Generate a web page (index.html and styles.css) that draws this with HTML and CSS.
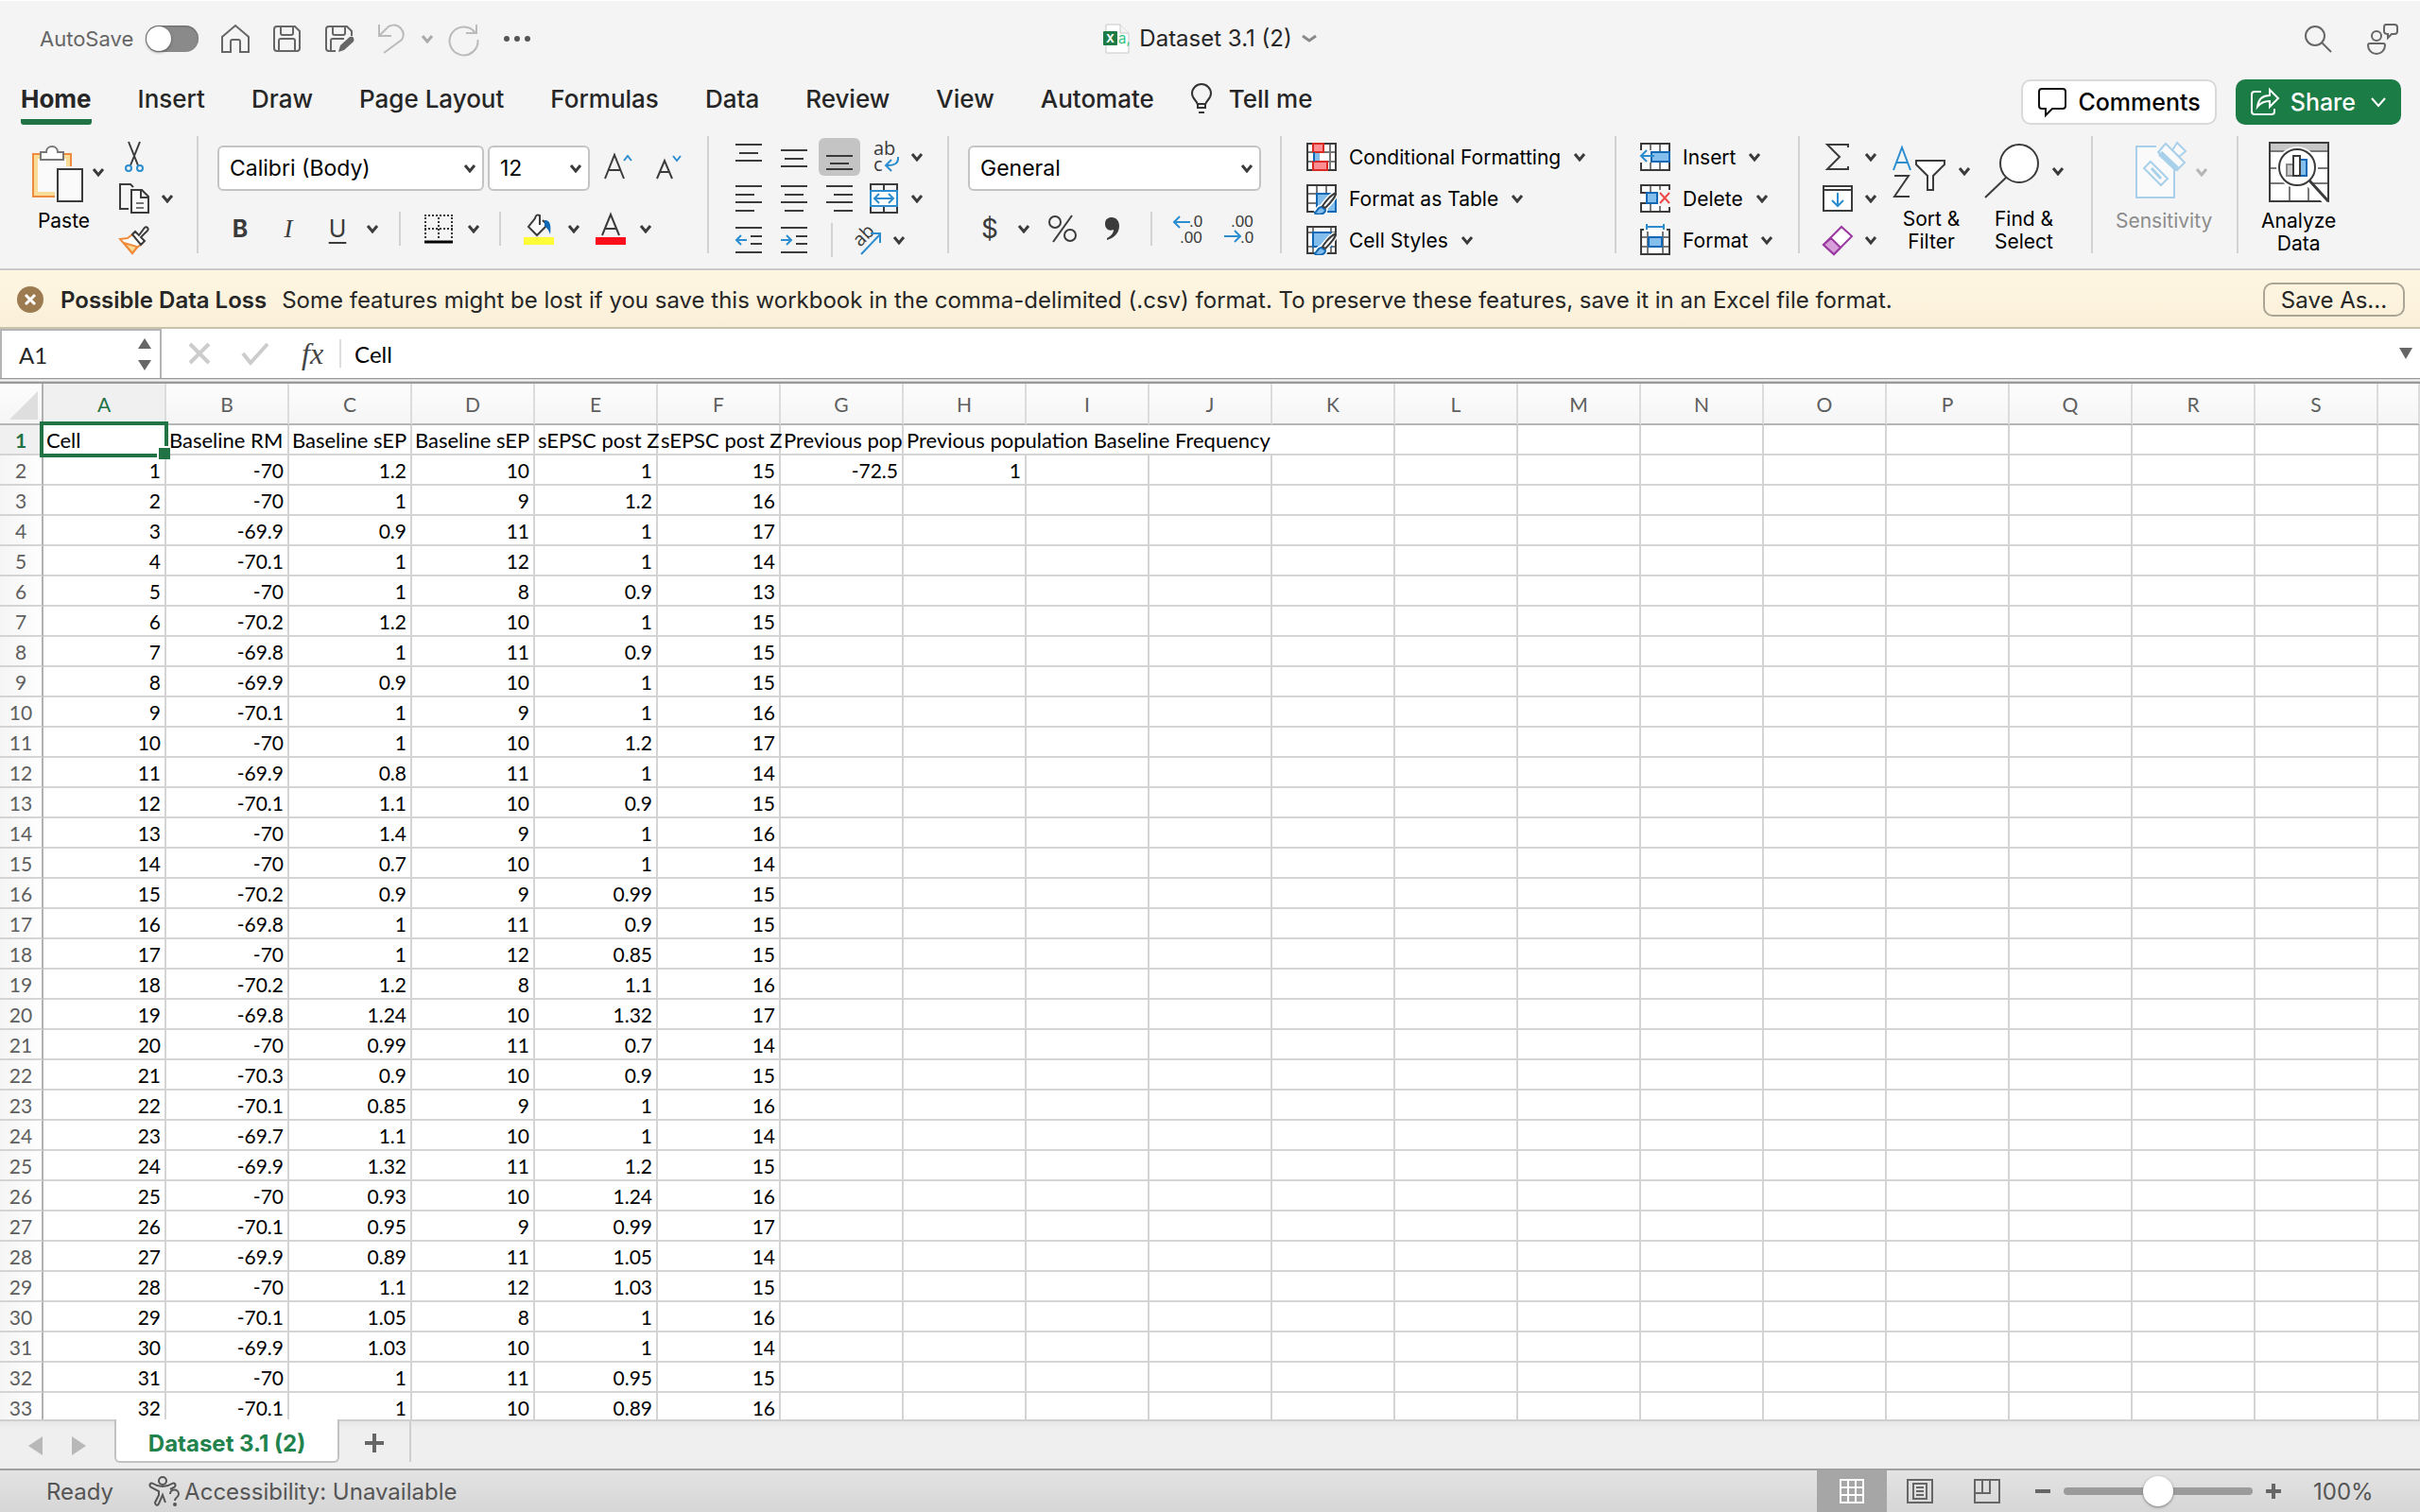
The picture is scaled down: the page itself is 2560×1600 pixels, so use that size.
FILE: index.html
```html
<!DOCTYPE html>
<html lang="en">
<head>
    <meta charset="UTF-8">
    <meta name="viewport" content="width=device-width, initial-scale=1.0">
    <title>Dataset 3.1 (2)</title>
    <link rel="stylesheet" href="styles.css">
</head>
<body>
    <svg class="sprite" aria-hidden="true">
        <symbol id="chev" viewBox="0 0 14 10"><path d="M2 2l5 6 5-6" fill="none" stroke="currentColor" stroke-width="3"/></symbol>
        <symbol id="pen" viewBox="0 0 24 24">
            <path d="M0 22c4 0 3-6 8-6l4 3c0 5-8 6-12 3z" fill="#83beec" stroke="#fff" stroke-width="5"/>
            <path d="M9 15C13 9 19 3 23 1c1 2-4 9-11 16z" fill="#fff" stroke="#fff" stroke-width="5"/>
            <path d="M0 22c4 0 3-6 8-6l4 3c0 5-8 6-12 3z" fill="#83beec" stroke="#1068b5" stroke-width="2"/>
            <path d="M9 15C13 9 19 3 23 1c1 2-4 9-11 16z" fill="#fff" stroke="#3b3b3b" stroke-width="2"/>
        </symbol>
    </svg>

    <header class="titlebar">
        <div class="quick">
            <label for="autosave">AutoSave</label>
            <input type="checkbox" id="autosave" class="toggle">
            <button aria-label="Home"><svg width="32" height="32" viewBox="0 0 32 32"><path d="M2 14L16 2l14 12v16h-9V19q0-2-2-2h-6q-2 0-2 2v11H2z"/></svg></button>
            <button aria-label="Save"><svg width="32" height="32" viewBox="0 0 32 32"><path d="M5 3h19l5 5v18q0 3-3 3H5q-3 0-3-3V6q0-3 3-3zM9 3v7q0 2 2 2h9q2 0 2-2V3M7 29V18q0-2 2-2h13q2 0 2 2v11"/></svg></button>
            <button aria-label="Save As"><svg width="32" height="32" viewBox="0 0 32 32"><path d="M12 29H5q-3 0-3-3V6q0-3 3-3h19l5 5v5M9 3v7q0 2 2 2h9q2 0 2-2V3M7 29V18q0-2 2-2h12"/><path d="M15 30l2-7 10-9q3-1 4 1t0 4l-10 9z" fill="#666" stroke="none"/></svg></button>
            <button class="faded" aria-label="Undo"><svg width="32" height="32" viewBox="0 0 32 32"><path d="M3 1v12h13M3 13L13 3q8-4 13 2t1 12L8 31"/></svg></button>
            <button class="faded small" aria-label="Undo history"><svg class="chev"><use href="#chev"/></svg></button>
            <button class="faded" aria-label="Redo"><svg width="34" height="32" viewBox="0 0 34 32"><path d="M30 1v9H19M29 10A15 15 0 1 0 31.500 17"/></svg></button>
            <button aria-label="More"><svg width="32" height="32" viewBox="0 0 32 32"><g fill="#555" stroke="none"><circle cx="5" cy="16" r="3"/><circle cx="16" cy="16" r="3"/><circle cx="27" cy="16" r="3"/></g></svg></button>
        </div>
        <button class="docname">
            <svg width="30" height="34" viewBox="0 0 30 34"><path d="M4 2h15l9 9v21H4z" fill="#fff" stroke="#c8c8c8" stroke-width="1"/><path d="M19 2v9h9" fill="#f4f4f4" stroke="#c8c8c8" stroke-width="1"/><rect x="1" y="9" width="15" height="15" rx="1" fill="#1d7b45"/><text x="4" y="21" class="doc-x">X</text><text x="17" y="22" class="doc-a">a,</text></svg>
            Dataset 3.1 (2)
            <svg class="chev-wide" width="18" height="10" viewBox="0 0 18 10"><path d="M2 2l7 5 7-5" fill="none" stroke="#8a8a8a" stroke-width="3"/></svg>
        </button>
        <div class="corner">
            <button aria-label="Search"><svg width="30" height="32" viewBox="0 0 30 32"><circle cx="12" cy="13" r="10"/><path d="M19 20l10 10"/></svg></button>
            <button aria-label="Presence"><svg width="34" height="34" viewBox="0 0 34 34"><circle cx="11" cy="14" r="5"/><path d="M4 22h14q2 0 2 2c0 5-4 9-9 9s-9-4-9-9q0-2 2-2z"/><path d="M21 2h9q3 0 3 3v4q0 3-3 3h-3l-4 4v-4q-4 0-4-3V5q0-3 2-3z"/></svg></button>
        </div>
    </header>

    <div class="tabrow">
        <nav class="tabs">
            <a href="#" class="active">Home</a>
            <a href="#">Insert</a>
            <a href="#">Draw</a>
            <a href="#">Page Layout</a>
            <a href="#">Formulas</a>
            <a href="#">Data</a>
            <a href="#">Review</a>
            <a href="#">View</a>
            <a href="#">Automate</a>
            <a href="#" class="tellme"><svg width="22" height="32" viewBox="0 0 22 32"><path d="M7 25v-3c0-4-6-6-6-12a10 10 0 0 1 20 0c0 6-6 8-6 12v3zM7 21h8M8 30h6" fill="none" stroke="#333" stroke-width="2"/></svg>Tell me</a>
        </nav>
        <div class="actions">
            <button class="comments"><svg width="32" height="32" viewBox="0 0 32 32"><path d="M5 2h22q3 0 3 3v15q0 3-3 3H16l-7 7v-7H5q-3 0-3-3V5q0-3 3-3z" fill="none" stroke="#111" stroke-width="2"/></svg>Comments</button>
            <button class="share"><svg width="32" height="32" viewBox="0 0 32 32"><path d="M12 5H5Q2 5 2 8v18q0 3 3 3h18q3 0 3-3v-3M8 21c1-8 5-12 13-12V3l9 9-9 9v-6c-6 0-10 2-13 6z" fill="none" stroke="#fff" stroke-width="2"/></svg>Share<svg class="chev-share" width="18" height="12" viewBox="0 0 18 12"><path d="M2 2l7 8 7-8" fill="none" stroke="#fff" stroke-width="2"/></svg></button>
        </div>
    </div>

    <div class="ribbon">
        <section class="group clipboard">
            <button class="big paste">
                <span class="pic"><svg width="56" height="64" viewBox="0 0 56 64"><path d="M1 13h40v18H27v27H1z" fill="#f9dc97" stroke="#ee8b3c" stroke-width="2"/><path d="M6 18h30v14H26v21H6z" fill="#fafafa"/><path d="M9 11h6c0-8 12-8 12 0h6v8H9z" fill="#fff" stroke="#777" stroke-width="2"/><path d="M24 26h32v38H24z" fill="#f4f4f4"/><rect x="27" y="29" width="26" height="34" fill="#fafafa" stroke="#3b3b3b" stroke-width="2"/></svg><svg class="chev"><use href="#chev"/></svg></span>
                <span class="caption">Paste</span>
            </button>
            <div class="stack">
                <button aria-label="Cut"><svg width="32" height="34" viewBox="0 0 32 34"><path d="M10 1l10 25M22 1L12 26" fill="none" stroke="#3b3b3b" stroke-width="2"/><g fill="none" stroke="#2b8dd0" stroke-width="2"><circle cx="10" cy="29" r="3"/><circle cx="22" cy="29" r="3"/></g></svg></button>
                <button aria-label="Copy"><svg width="32" height="34" viewBox="0 0 32 34"><path d="M10 28H1V2h11l3 3" fill="none" stroke="#3b3b3b" stroke-width="2"/><path d="M13 8h11l7 7v17H13zM23 8v8h8" fill="#fafafa" stroke="#3b3b3b" stroke-width="2"/><path d="M18 22h8M18 27h8" stroke="#777" stroke-width="2"/></svg><svg class="chev"><use href="#chev"/></svg></button>
                <button aria-label="Format Painter"><svg width="32" height="32" viewBox="0 0 32 32"><path d="M1 15l8-1 5-4 10 10-5 4-5 6z" fill="#fff" stroke="#ee8b3c" stroke-width="2"/><path d="M5 19l14 4-5 7z" fill="#f9dc97" stroke="#ee8b3c" stroke-width="2"/><path d="M14 10l3-3 4 4 6-8c2-2 5 1 3 3l-7 7 4 4-4 4z" fill="#fff" stroke="#3b3b3b" stroke-width="2"/></svg></button>
            </div>
        </section>

        <section class="group font">
            <div class="line">
                <div class="select face"><select aria-label="Font"><option>Calibri (Body)</option></select><svg class="chev"><use href="#chev"/></svg></div>
                <div class="select size"><select aria-label="Font size"><option>12</option></select><svg class="chev"><use href="#chev"/></svg></div>
                <button class="grow" aria-label="Increase Font Size"><svg width="32" height="30" viewBox="0 0 32 30"><path d="M2 28L12 3l10 25M6 19h12" fill="none" stroke="#3b3b3b" stroke-width="2"/><path d="M22 9l4-5 4 5" fill="none" stroke="#2b8dd0" stroke-width="2"/></svg></button>
                <button class="grow" aria-label="Decrease Font Size"><svg width="32" height="30" viewBox="0 0 32 30"><path d="M3 28L11 9l8 19M6 21h10" fill="none" stroke="#3b3b3b" stroke-width="2"/><path d="M20 4l4 5 4-5" fill="none" stroke="#2b8dd0" stroke-width="2"/></svg></button>
            </div>
            <div class="line tools">
                <button class="letter bold">B</button>
                <button class="letter italic">I</button>
                <button class="letter under">U</button>
                <button class="drop" aria-label="Underline style"><svg class="chev"><use href="#chev"/></svg></button>
                <i class="rule"></i>
                <button class="pair" aria-label="Borders"><svg width="32" height="32" viewBox="0 0 32 32"><path d="M1 2h30M1 16h30M2 4v24M16 4v24M30 4v24" fill="none" stroke="#333" stroke-width="2" stroke-dasharray="2 2"/><path d="M1 30h30" stroke="#000" stroke-width="3"/></svg><svg class="chev"><use href="#chev"/></svg></button>
                <i class="rule"></i>
                <button class="pair" aria-label="Fill Color"><svg width="32" height="34" viewBox="0 0 32 34"><path d="M17 13V3q-4-2-5 3l-7 9 9 9 11-11-5-5" fill="#fafafa" stroke="#3b3b3b" stroke-width="2"/><path d="M22 8q8-1 6 15-2-6-6-9z" fill="#1068b5"/><rect y="26" width="32" height="8" fill="#fffd38"/></svg><svg class="chev"><use href="#chev"/></svg></button>
                <button class="pair" aria-label="Font Color"><svg width="32" height="34" viewBox="0 0 32 34"><path d="M7 24l9-22 9 22M10 17h12" fill="none" stroke="#3b3b3b" stroke-width="2"/><rect y="26" width="32" height="8" fill="#fc0d1b"/></svg><svg class="chev"><use href="#chev"/></svg></button>
            </div>
        </section>

        <section class="group align">
            <button aria-label="Top Align"><svg width="28" height="28" viewBox="0 0 28 28"><path d="M0 1h28M4 10h20M0 18h28"/></svg></button>
            <button aria-label="Middle Align"><svg width="28" height="28" viewBox="0 0 28 28"><path d="M0 7h28M4 16h20M0 24h28"/></svg></button>
            <button class="on" aria-label="Bottom Align"><svg width="28" height="28" viewBox="0 0 28 28"><path d="M0 13h28M4 21h20M0 27h28"/></svg></button>
            <button class="pair" aria-label="Wrap Text"><svg width="30" height="34" viewBox="0 0 30 34"><text x="4" y="15" class="ab">ab</text><text x="4" y="32" class="ab">c</text><path d="M30 17q1 10-13 9M23 20l-6 6 6 6" class="blue"/></svg><svg class="chev"><use href="#chev"/></svg></button>
            <button aria-label="Align Left"><svg width="28" height="28" viewBox="0 0 28 28"><path d="M0 1h28M0 10h20M0 18h28M0 27h20"/></svg></button>
            <button aria-label="Center"><svg width="28" height="28" viewBox="0 0 28 28"><path d="M0 1h28M4 10h20M0 18h28M4 27h20"/></svg></button>
            <button aria-label="Align Right"><svg width="28" height="28" viewBox="0 0 28 28"><path d="M0 1h28M8 10h20M0 18h28M8 27h20"/></svg></button>
            <button class="pair" aria-label="Merge and Center"><svg width="30" height="32" viewBox="0 0 30 32"><path d="M1 1h28v30H1zM15 1v6M15 25v6"/><rect x="1" y="8" width="28" height="16" class="blue white"/><path d="M5 16h20M10 11l-5 5 5 5M20 11l5 5-5 5" class="blue"/></svg><svg class="chev"><use href="#chev"/></svg></button>
            <button aria-label="Decrease Indent"><svg width="28" height="28" viewBox="0 0 28 28"><path d="M0 1h28M16 10h12M16 18h12M0 27h28"/><path d="M1 14h11M6 9l-5 5 5 5" class="blue"/></svg></button>
            <button aria-label="Increase Indent"><svg width="28" height="28" viewBox="0 0 28 28"><path d="M0 1h28M16 10h12M16 18h12M0 27h28"/><path d="M0 14h11M6 9l5 5-5 5" class="blue"/></svg></button>
            <i class="rule"></i>
            <button class="pair orient" aria-label="Orientation"><svg width="34" height="34" viewBox="0 0 34 34"><text x="0" y="0" transform="translate(10 25) rotate(-45)" class="ab">ab</text><path d="M11 32l20-21M21 10h10v10" class="blue"/></svg><svg class="chev"><use href="#chev"/></svg></button>
        </section>

        <section class="group number">
            <div class="line">
                <div class="select format"><select aria-label="Number Format"><option>General</option></select><svg class="chev"><use href="#chev"/></svg></div>
            </div>
            <div class="line tools">
                <button class="dollar pair" aria-label="Currency"><span>$</span><svg class="chev"><use href="#chev"/></svg></button>
                <button aria-label="Percent"><svg width="32" height="32" viewBox="0 0 32 32"><g fill="none" stroke="#3b3b3b" stroke-width="2"><circle cx="8" cy="9" r="6"/><circle cx="24" cy="23" r="6"/><path d="M26 2L6 30"/></g></svg></button>
                <button class="comma" aria-label="Comma Style"><svg width="18" height="28" viewBox="0 0 18 28"><path d="M8 2c5 0 8 4 8 9 0 8-6 13-13 15v-2c4-2 7-5 7-9-5 2-9-1-9-6s3-7 7-7z" fill="#3b3b3b"/></svg></button>
                <i class="rule"></i>
                <button class="dec" aria-label="Increase Decimal"><svg width="32" height="34" viewBox="0 0 32 34"><text x="17" y="15" class="num">.0</text><text x="7" y="32" class="num">.00</text><path d="M1 10h17M7 4l-6 6 6 6" class="blue"/></svg></button>
                <button class="dec" aria-label="Decrease Decimal"><svg width="32" height="34" viewBox="0 0 32 34"><text x="7" y="15" class="num">.00</text><text x="17" y="32" class="num">.0</text><path d="M0 25h17M11 19l6 6-6 6" class="blue"/></svg></button>
            </div>
        </section>

        <section class="group stack labelled">
            <button><svg width="32" height="30" viewBox="0 0 32 30"><rect x="1" y="1" width="30" height="28" fill="#fff"/><path d="M1 10h30M1 20h30M25 1v28" class="g"/><rect x="1" y="1" width="30" height="28" class="k"/><path d="M7 1h11v9H7zM7 20h15v9H7z" fill="#ff8d92" stroke="#d92a23" stroke-width="2"/><path d="M7 11h7v8H7z" fill="#83beec"/><path d="M8 10v10" stroke="#1068b5" stroke-width="2"/></svg>Conditional Formatting<svg class="chev"><use href="#chev"/></svg></button>
            <button><svg width="32" height="30" viewBox="0 0 32 30"><rect x="1" y="1" width="30" height="28" fill="#fff"/><path d="M1 10h30M1 20h10M11 1v9M21 1v9" class="g"/><rect x="1" y="1" width="30" height="28" class="k"/><rect x="11" y="10" width="20" height="19" class="b"/><use href="#pen" x="8" y="8" width="24" height="24"/></svg>Format as Table<svg class="chev"><use href="#chev"/></svg></button>
            <button><svg width="32" height="30" viewBox="0 0 32 30"><rect x="1" y="1" width="30" height="28" fill="#fff"/><path d="M7 1v28M1 7h30M26 1v28M1 22h30" class="g"/><rect x="1" y="1" width="30" height="28" class="k"/><rect x="7" y="7" width="19" height="15" class="b"/><use href="#pen" x="8" y="7" width="24" height="24"/></svg>Cell Styles<svg class="chev"><use href="#chev"/></svg></button>
        </section>

        <section class="group stack labelled cells">
            <button><svg width="32" height="30" viewBox="0 0 32 30"><rect x="1" y="1" width="30" height="28" fill="#fff"/><path d="M11 1v28M21 1v28" class="g"/><rect x="1" y="1" width="30" height="28" class="k"/><path d="M0 8h14v13H0z" fill="#f4f4f4"/><rect x="12" y="10" width="19" height="10" class="b"/><path d="M1 14h14M7 8l-6 6 6 6" class="blue"/></svg>Insert<svg class="chev"><use href="#chev"/></svg></button>
            <button><svg width="32" height="30" viewBox="0 0 32 30"><rect x="1" y="1" width="30" height="28" fill="#fff"/><path d="M11 1v28M21 1v28" class="g"/><path d="M31 6V1H1v8h6M7 20H1v9h30v-5" class="k"/><rect x="7" y="9" width="11" height="11" class="b"/><path d="M19 6h13v17H19z" fill="#f4f4f4"/><path d="M21 9l10 11M31 9L21 20" stroke="#ef4848" stroke-width="2"/></svg>Delete<svg class="chev"><use href="#chev"/></svg></button>
            <button><svg width="32" height="34" viewBox="0 0 32 34"><path d="M2 6h28v26H2z" fill="#fff"/><path d="M8 8v24M24 8v24M1 14h30M1 24h30" class="g"/><path d="M4 6H1v26h30V6h-3" class="k"/><rect x="9" y="14" width="14" height="10" class="b"/><path d="M7 0v6M25 0v6M7 3h18" class="blue"/></svg>Format<svg class="chev"><use href="#chev"/></svg></button>
        </section>

        <section class="group editing">
            <div class="stack">
                <button aria-label="AutoSum"><svg width="32" height="30" viewBox="0 0 32 30"><path d="M27 5V2H5l13 13L5 28h22v-3" fill="none" stroke="#3b3b3b" stroke-width="2"/></svg><svg class="chev"><use href="#chev"/></svg></button>
                <button aria-label="Fill"><svg width="32" height="30" viewBox="0 0 32 30"><path d="M1 2h30v26H1zM1 6h30" fill="#fff" stroke="#3b3b3b" stroke-width="2"/><path d="M16 9v14M10 17l6 6 6-6" class="blue"/></svg><svg class="chev"><use href="#chev"/></svg></button>
                <button aria-label="Clear"><svg width="32" height="32" viewBox="0 0 32 32"><path d="M1 21L20 2l11 10-19 19z" fill="#fff" stroke="#9a37a0" stroke-width="2"/><path d="M1 21l8-7 10 10-7 7z" fill="#d79fd9" stroke="#9a37a0" stroke-width="2"/></svg><svg class="chev"><use href="#chev"/></svg></button>
            </div>
            <button class="big sort">
                <span class="pic"><svg width="58" height="60" viewBox="0 0 58 60"><path d="M2 29l9-24 9 24M5 21h12" class="blue"/><path d="M3 35h15L3 57h16" class="dark"/><path d="M26 19h30v4L44 35v15h-6V35L26 23z" fill="#fff" stroke="#3b3b3b" stroke-width="2"/></svg><svg class="chev"><use href="#chev"/></svg></span>
                <span>Sort &amp;<br>Filter</span>
            </button>
            <button class="big find">
                <span class="pic"><svg width="60" height="60" viewBox="0 0 60 60"><circle cx="38" cy="22" r="20" fill="#fff" stroke="#3b3b3b" stroke-width="2"/><path d="M24 37L2 58" stroke="#3b3b3b" stroke-width="2"/></svg><svg class="chev"><use href="#chev"/></svg></span>
                <span>Find &amp;<br>Select</span>
            </button>
        </section>

        <section class="group sens">
            <button class="big" disabled>
                <span class="pic"><svg width="56" height="64" viewBox="0 0 56 64"><g fill="#fafafa" stroke="#a9d0ea" stroke-width="2"><path d="M22 5H1v54h40V29"/><path d="M16 21l18 18-7 7L9 28z"/><path d="M17 28l10 11" stroke-width="3"/><path d="M44 1l9 9-7 6-7-7z"/><path d="M32 2l20 20-8 8-20-19z"/><path d="M26 12l18 17" stroke-width="6"/></g></svg><svg class="chev"><use href="#chev"/></svg></span>
                <span>Sensitivity</span>
            </button>
        </section>

        <section class="group analyze">
            <button class="big">
                <span class="pic"><svg width="64" height="64" viewBox="0 0 64 64"><rect x="1" y="1" width="62" height="62" fill="#fff"/><path d="M1 1h62v9H1z" fill="#c8c8c8"/><path d="M1 10h62M1 28h62M1 44h62M22 44v19M42 44v19" stroke="#777" stroke-width="2"/><rect x="1" y="1" width="62" height="62" class="k"/><circle cx="30" cy="27" r="22" fill="#fff"/><circle cx="30" cy="27" r="19" fill="#fff" stroke="#3b3b3b" stroke-width="2"/><rect x="19" y="24" width="7" height="12" fill="#ccc" stroke="#888" stroke-width="2"/><rect x="33" y="19" width="7" height="17" class="b"/><rect x="26" y="15" width="7" height="21" fill="#fff" stroke="#3b3b3b" stroke-width="2"/><path d="M41 44l20 21" stroke="#fff" stroke-width="5"/><path d="M43 41l20 22" stroke="#3b3b3b" stroke-width="3"/></svg></span>
                <span>Analyze<br>Data</span>
            </button>
        </section>
    </div>

    <div class="warning">
        <button class="dismiss" aria-label="Dismiss"><svg width="28" height="28" viewBox="0 0 28 28"><circle cx="14" cy="14" r="14" fill="#9c7b50"/><path d="M9 9l10 10M19 9L9 19" stroke="#fff" stroke-width="3"/></svg></button>
        <strong>Possible Data Loss</strong>
        <span>Some features might be lost if you save this workbook in the comma-delimited (.csv) format. To preserve these features, save it in an Excel file format.</span>
        <button class="saveas">Save As...</button>
    </div>

    <div class="formula">
        <div class="namebox">
            <input type="text" value="A1" aria-label="Name Box">
            <svg width="14" height="34" viewBox="0 0 14 34"><path d="M0 11L7 0l7 11zM0 23h14L7 34z" fill="#666"/></svg>
        </div>
        <button aria-label="Cancel"><svg width="26" height="26" viewBox="0 0 26 26"><path d="M3 3l20 20M23 3L3 23" fill="none" stroke="#ccc" stroke-width="4"/></svg></button>
        <button aria-label="Enter"><svg width="30" height="26" viewBox="0 0 30 26"><path d="M2 13l8 10L28 3" fill="none" stroke="#ccc" stroke-width="4"/></svg></button>
        <button class="fx">fx</button>
        <input type="text" class="content" value="Cell" aria-label="Formula">
        <button class="expand" aria-label="Expand formula bar"><svg width="14" height="12" viewBox="0 0 14 12"><path d="M0 0h14L7 12z" fill="#666"/></svg></button>
    </div>

    <main class="sheet">
        <table id="grid"></table>
    </main>

    <div class="sheetbar">
        <button aria-label="Previous sheet"><svg width="16" height="20" viewBox="0 0 16 20"><path d="M16 0v20L1 10z" fill="#b8b8b8"/></svg></button>
        <button aria-label="Next sheet"><svg width="16" height="20" viewBox="0 0 16 20"><path d="M1 0v20l15-10z" fill="#b8b8b8"/></svg></button>
        <button class="sheettab">Dataset 3.1 (2)</button>
        <button class="add" aria-label="Add sheet"><svg width="20" height="20" viewBox="0 0 20 20"><path d="M10 0v20M0 10h20" stroke="#666" stroke-width="4"/></svg></button>
    </div>

    <footer class="status">
        <span class="ready">Ready</span>
        <button class="access"><svg width="32" height="32" viewBox="0 0 32 32"><g fill="none" stroke="#555" stroke-width="2"><circle cx="14" cy="5" r="4"/><path d="M22 14l4-2c3-2 1-6-2-4-6 4-14 4-20 0-3-2-5 2-2 4l8 4v4L6 28c0 3 3 4 4 1l4-9 3 8"/><path d="M22 19c0-6 9-6 9 0 0 4-4 3-4 7"/></g><circle cx="27" cy="30" r="2" fill="#555"/></svg>Accessibility: Unavailable</button>
        <div class="views">
            <button class="on" aria-label="Normal"><svg width="28" height="28" viewBox="0 0 28 28"><path d="M2 2h24v24H2zM10 2v24M18 2v24M2 10h24M2 18h24" fill="none" stroke="#fff" stroke-width="2"/></svg></button>
            <button aria-label="Page Layout view"><svg width="28" height="28" viewBox="0 0 28 28"><path d="M1 2h26v24H1zM7 6h14v16H7zM10 10h8M10 14h8M10 18h8" fill="none" stroke="#666" stroke-width="2"/></svg></button>
            <button aria-label="Page Break Preview"><svg width="28" height="28" viewBox="0 0 28 28"><path d="M1 2h26v24H1zM1 16h16V2M9 2v14" fill="none" stroke="#666" stroke-width="2"/></svg></button>
        </div>
        <button class="zoomstep" aria-label="Zoom out"><svg width="16" height="16" viewBox="0 0 16 16"><path d="M0 8h16" stroke="#666" stroke-width="4"/></svg></button>
        <input type="range" class="zoom" min="0" max="100" value="50" aria-label="Zoom">
        <button class="zoomstep" aria-label="Zoom in"><svg width="16" height="16" viewBox="0 0 16 16"><path d="M0 8h16M8 0v16" stroke="#666" stroke-width="4"/></svg></button>
        <span class="percent">100%</span>
    </footer>

    <script src="script.js"></script>
</body>
</html>
```

FILE: styles.css
```css
* {
    box-sizing: border-box;
}

body {
    margin: 0;
    height: 100vh;
    display: flex;
    flex-direction: column;
    overflow: hidden;
    background: #f4f4f4;
    color: #262626;
    font-family: Inter, "Liberation Sans", sans-serif;
    font-size: 24px;
}

button, input, select {
    font: inherit;
    color: inherit;
    margin: 0;
    padding: 0;
    border: none;
    background: none;
}

button {
    display: flex;
    align-items: center;
    justify-content: center;
    white-space: nowrap;
}

svg {
    display: block;
    flex: none;
    overflow: visible;
}

.sprite {
    display: none;
}

.chev {
    width: 14px;
    height: 10px;
    color: #3b3b3b;
}

/* title bar */
.titlebar {
    display: grid;
    grid-template-columns: 1fr auto 1fr;
    align-items: center;
    height: 80px;
    border-top: 1px solid #fff;
}

.quick {
    display: flex;
    align-items: center;
    gap: 23px;
    padding-left: 42px;
    color: #666;
    font-size: 22px;
}

.quick label {
    margin-right: -10px;
}

.quick svg, .corner svg {
    fill: none;
    stroke: #666;
    stroke-width: 2;
}

.quick .faded svg {
    stroke: #bbb;
}

.quick .small {
    margin: 0 -8px;
}

.quick .chev {
    color: #aaa;
    stroke-width: 0;
}

.toggle {
    appearance: none;
    width: 56px;
    height: 28px;
    border-radius: 14px;
    background: #8a8a8a;
    box-shadow: inset 0 1px 2px #666;
}

.toggle::before {
    content: "";
    display: block;
    width: 26px;
    height: 26px;
    margin: 1px;
    border-radius: 50%;
    background: #fff;
    box-shadow: 0 1px 3px #555;
}

.docname {
    gap: 9px;
}

.doc-x {
    fill: #fff;
    font: bold 12px Inter, sans-serif;
}

.doc-a {
    fill: #33c481;
    font: 15px Inter, sans-serif;
}

.corner {
    display: flex;
    justify-content: flex-end;
    align-items: center;
    gap: 36px;
    padding-right: 23px;
}

/* ribbon tabs */
.tabrow {
    display: flex;
    justify-content: space-between;
    height: 64px;
    padding: 4px 20px 0 22px;
}

.tabs {
    display: flex;
    gap: 49px;
    font-size: 26px;
    font-weight: 500;
}

.tabs a {
    height: 48px;
    line-height: 42px;
    color: inherit;
    text-decoration: none;
    white-space: nowrap;
}

.tabs .active {
    font-weight: 700;
    border-bottom: 6px solid #217346;
    border-radius: 3px;
}

.tabs .tellme {
    display: flex;
    gap: 18px;
    margin-left: -10px;
}

.tellme svg {
    margin-top: 5px;
}

.actions {
    display: flex;
    gap: 20px;
    font-size: 25px;
    font-weight: 500;
}

.actions button {
    height: 48px;
    gap: 11px;
    padding: 0 15px;
    border-radius: 10px;
}

.comments {
    background: #fff;
    border: 2px solid #d9d9d9;
    color: #000;
}

.share {
    background: #1b7c45;
    color: #fff;
}

.chev-share {
    margin-left: 4px;
}

/* ribbon */
.ribbon {
    display: grid;
    grid-template-columns: 210px 540px 254px 352px 354px 194px 310px 154px 1fr;
    height: 142px;
    padding-bottom: 16px;
    border-bottom: 2px solid #c8c8c8;
    color: #000;
    font-size: 21px;
}

.group {
    border-right: 2px solid #d2d2d2;
    height: 124px;
}

.analyze {
    border-right: none;
}

.blue {
    fill: none;
    stroke: #2b8dd0;
    stroke-width: 2;
}

.dark, .k {
    fill: none;
    stroke: #3b3b3b;
    stroke-width: 2;
}

.g {
    fill: none;
    stroke: #777;
    stroke-width: 2;
}

.b {
    fill: #83beec;
    stroke: #1068b5;
    stroke-width: 2;
}

.ribbon .white {
    fill: #fff;
}

.rule {
    width: 2px;
    height: 36px;
    background: #d2d2d2;
}

.pair {
    gap: 14px;
}

.clipboard, .editing {
    display: flex;
}

.clipboard {
    padding-left: 34px;
    gap: 15px;
}

.stack {
    display: grid;
    grid-template-rows: 44px 44px 44px;
    justify-items: start;
}

.stack button {
    gap: 12px;
}

.big {
    flex-direction: column;
    justify-content: flex-start;
    height: 124px;
    line-height: 24px;
    text-align: center;
}

.big .pic {
    display: flex;
    align-items: center;
    gap: 7px;
    height: 64px;
    margin: 6px 0 8px;
}

/* caption sits under the icon, not under the arrow */
.paste .caption {
    padding-right: 10px;
}

.line {
    display: flex;
    padding: 10px 0 0 20px;
}

.select {
    display: grid;
    align-items: center;
    height: 48px;
    background: #fff;
    border: 2px solid #c4c4c4;
    border-radius: 6px;
}

.select select {
    appearance: none;
    grid-area: 1 / 1;
    height: 44px;
    padding-left: 11px;
    font-size: 23px;
}

.select .chev {
    grid-area: 1 / 1;
    justify-self: end;
    margin-right: 6px;
    pointer-events: none;
}

.face {
    width: 282px;
    margin-right: 4px;
}

.size {
    width: 108px;
    margin-right: 14px;
}

.grow {
    width: 54px;
    height: 44px;
    justify-content: flex-start;
}

.tools {
    align-items: center;
    height: 58px;
    padding: 22px 0 0 22px;
}

.letter {
    color: #3b3b3b;
    font-size: 25px;
}

.bold {
    width: 44px;
    font-weight: 700;
}

.italic {
    width: 58px;
    font-family: "Liberation Serif", serif;
    font-style: italic;
    font-size: 27px;
}

.under {
    width: 46px;
    text-decoration: underline;
    text-underline-offset: 5px;
}

.drop {
    width: 28px;
    margin-right: 14px;
}

.font .pair {
    margin-left: 24px;
}

.font .rule ~ .rule {
    margin-left: 20px;
}

.font .pair ~ .pair ~ .pair {
    margin-left: 16px;
}

/* alignment buttons share one 4-column grid */
.align {
    display: grid;
    grid-template: repeat(3, 44px) / 48px 48px 48px 1fr;
    align-items: center;
    padding-left: 18px;
}

.align button {
    height: 40px;
}

.align button > svg:first-child {
    stroke: #3b3b3b;
    stroke-width: 2;
    fill: none;
}

.align .on {
    width: 44px;
    justify-self: center;
    background: #c4c4c4;
    border-radius: 6px;
}

.align .pair {
    justify-content: flex-start;
    padding-left: 8px;
    gap: 13px;
}

.align .rule {
    justify-self: center;
    margin-right: 16px;
}

.align .orient {
    margin-left: -20px;
    gap: 10px;
}

.align .ab, .num {
    font-family: "Open Sans", sans-serif;
    font-size: 20px;
    fill: #3b3b3b;
    stroke: none;
}

.num {
    font-size: 17px;
    font-family: "Liberation Sans", sans-serif;
}

.format {
    width: 310px;
}

.number .tools {
    padding-left: 34px;
}

.dollar {
    font-size: 28px;
    color: #3b3b3b;
    gap: 20px;
    margin-right: 18px;
}

.comma {
    margin: 0 31px 0 28px;
}

.dec {
    margin-left: 22px;
}

.labelled {
    padding-left: 26px;
}

.cells {
    padding-left: 25px;
}

.labelled button {
    gap: 13px;
}

.editing {
    padding-left: 24px;
}

.sort {
    margin-left: 15px;
}

.find {
    margin-left: 13px;
}

.sort .pic, .find .pic {
    gap: 12px;
}

.sens {
    padding-left: 24px;
}

.sens button {
    color: #8c8c8c;
}

.sens .pic {
    margin-left: 17px;
}

.sens .chev {
    color: #b5b5b5;
}

.analyze {
    padding-left: 24px;
}

/* message bar */
.warning {
    display: flex;
    align-items: center;
    height: 62px;
    padding: 2px 16px 0 18px;
    border-bottom: 2px solid #c9c2ae;
    background: linear-gradient(#fff6e1, #faf0da);
    white-space: nowrap;
}

.warning strong {
    margin: 0 16px 0 18px;
    font-weight: 600;
}

.saveas {
    width: 150px;
    height: 36px;
    margin-left: auto;
    border: 2px solid #aba596;
    border-radius: 10px;
}

/* formula bar */
.formula {
    display: flex;
    align-items: center;
    height: 58px;
    padding-bottom: 6px;
    background: linear-gradient(#fff 0 52px, #999 52px 53px, #d8d8d8 53px 54px, #f4f4f4 54px 55px, #d0d0d0 55px 56px, #999 56px);
    font-family: Lato, "Liberation Sans", sans-serif;
}

.namebox {
    display: flex;
    align-items: center;
    justify-content: space-between;
    width: 171px;
    height: 52px;
    padding: 0 9px 0 18px;
    border: 2px solid #b4b4b4;
    border-bottom: none;
    margin-right: 27px;
}

.namebox input {
    width: 80px;
}

.formula button {
    margin-right: 31px;
}

.formula .fx {
    margin: 0 17px 0 3px;
    color: #444;
    font: italic 32px "Liberation Serif", serif;
}

.formula .content {
    flex: 1;
    height: 30px;
    padding-left: 14px;
    border-left: 2px solid #ddd;
    color: #000;
}

.formula .expand {
    margin-right: 8px;
}

/* grid */
.sheet {
    flex: 1;
    overflow: hidden;
    background: #fff;
    font-family: Lato, "Liberation Sans", sans-serif;
    font-size: 21px;
    color: #000;
}

table {
    width: 100%;
    table-layout: fixed;
    border-spacing: 0;
}

col {
    width: 130px;
}

.rowhead {
    width: 46px;
}

.rest {
    width: auto;
}

th, td {
    height: 32px;
    padding: 1px 4px 0;
    border: solid #d4d4d4;
    border-width: 0 2px 2px 0;
    line-height: 29px;
    text-align: right;
    white-space: nowrap;
}

td.text {
    padding: 1px 0 0 3px;
    font-size: 22px;
    text-align: left;
}

thead th {
    height: 44px;
    border-bottom-color: #b5b5b5;
    border-right-color: #dcdcdc;
    background: linear-gradient(#fdfdfd, #f5f5f5);
    color: #5f5f5f;
    font-weight: 400;
    text-align: center;
}

tbody th {
    padding-left: 0;
    padding-right: 0;
    border-right-color: #b0b0b0;
    background: linear-gradient(to right, #f5f5f5, #fefefe);
    color: #5f5f5f;
    font-weight: 400;
    text-align: center;
}

thead .corner-cell {
    padding: 8px 4px 4px 10px;
    border-right-color: #b0b0b0;
}

thead .picked, tbody .picked {
    background: #f0f0f0;
    color: #217346;
}

tbody .picked {
    font-weight: 700;
}

.selected {
    position: relative;
}

.selected::before {
    content: "";
    position: absolute;
    inset: -4px;
    border: 4px solid #217346;
}

.selected::after {
    content: "";
    position: absolute;
    right: -6px;
    bottom: -6px;
    width: 12px;
    height: 12px;
    background: #217346;
    border: solid #fff;
    border-width: 2px 0 0 2px;
}

/* sheet tabs */
.sheetbar {
    display: flex;
    height: 52px;
    padding: 0 29px;
    border-top: 2px solid #cfcfcf;
    background: linear-gradient(#e6e6e6, #efefef 8px);
}

.sheetbar button {
    height: 43px;
    padding-top: 8px;
    margin-right: 30px;
}

.sheetbar .sheettab {
    width: 238px;
    height: 46px;
    margin: -2px 0 0;
    padding: 6px 0 0;
    background: #fff;
    border: 2px solid #c2c2c2;
    border-top: none;
    border-radius: 0 0 6px 6px;
    color: #21824c;
    font-size: 24px;
    font-weight: 700;
}

.sheetbar .add {
    width: 76px;
    padding-top: 3px;
    border-right: 2px solid #cfcfcf;
}

/* status bar */
.status {
    display: flex;
    align-items: center;
    height: 46px;
    padding: 0 49px;
    border-top: 2px solid #a0a0a0;
    background: linear-gradient(#e3e3e3, #d6d6d6);
    color: #555;
}

.access {
    gap: 5px;
    margin-left: 38px;
}

.views {
    display: flex;
    gap: 43px;
    height: 44px;
    margin-left: auto;
    margin-right: 37px;
}

.views .on {
    width: 74px;
    margin-right: -22px;
    background: #a6a6a6;
}

.zoom {
    appearance: none;
    width: 200px;
    height: 8px;
    margin: 0 14px;
    border-radius: 4px;
    background: #9b9b9b;
}

.zoom::-webkit-slider-thumb {
    appearance: none;
    width: 32px;
    height: 32px;
    border-radius: 50%;
    background: #fff;
    box-shadow: 0 1px 3px #777;
}

.percent {
    width: 64px;
    margin-left: 34px;
}
```

FILE: script.js
```js
var columns = 'ABCDEFGHIJKLMNOPQRS'.split('');

var titles = ['Cell', 'Baseline RM', 'Baseline sEP', 'Baseline sEP', 'sEPSC post Z', 'sEPSC post Z', 'Previous pop', 'Previous population Baseline Frequency'];

// cell number is the row index, the rest are columns B onwards
var rows = [
    [-70, 1.2, 10, 1, 15, -72.5, 1],
    [-70, 1, 9, 1.2, 16],
    [-69.9, 0.9, 11, 1, 17],
    [-70.1, 1, 12, 1, 14],
    [-70, 1, 8, 0.9, 13],
    [-70.2, 1.2, 10, 1, 15],
    [-69.8, 1, 11, 0.9, 15],
    [-69.9, 0.9, 10, 1, 15],
    [-70.1, 1, 9, 1, 16],
    [-70, 1, 10, 1.2, 17],
    [-69.9, 0.8, 11, 1, 14],
    [-70.1, 1.1, 10, 0.9, 15],
    [-70, 1.4, 9, 1, 16],
    [-70, 0.7, 10, 1, 14],
    [-70.2, 0.9, 9, 0.99, 15],
    [-69.8, 1, 11, 0.9, 15],
    [-70, 1, 12, 0.85, 15],
    [-70.2, 1.2, 8, 1.1, 16],
    [-69.8, 1.24, 10, 1.32, 17],
    [-70, 0.99, 11, 0.7, 14],
    [-70.3, 0.9, 10, 0.9, 15],
    [-70.1, 0.85, 9, 1, 16],
    [-69.7, 1.1, 10, 1, 14],
    [-69.9, 1.32, 11, 1.2, 15],
    [-70, 0.93, 10, 1.24, 16],
    [-70.1, 0.95, 9, 0.99, 17],
    [-69.9, 0.89, 11, 1.05, 14],
    [-70, 1.1, 12, 1.03, 15],
    [-70.1, 1.05, 8, 1, 16],
    [-69.9, 1.03, 10, 1, 14],
    [-70, 1, 11, 0.95, 15],
    [-70.1, 1, 10, 0.89, 16]
];

var html = '<colgroup><col class="rowhead">' + columns.map(function () { return '<col>'; }).join('') + '<col class="rest"></colgroup>';

html += '<thead><tr><th class="corner-cell"><svg width="30" height="30" viewBox="0 0 30 30"><path d="M30 0v30H0z" fill="#dedede"/></svg></th>';
columns.forEach(function (name, i) {
    html += '<th' + (i === 0 ? ' class="picked"' : '') + '>' + name + '</th>';
});
html += '<th></th></tr></thead><tbody>';

// the last title runs over the empty cells next to it
html += '<tr><th class="picked">1</th>';
titles.forEach(function (title, i) {
    html += '<td class="text' + (i === 0 ? ' selected' : '') + '"' + (i === 7 ? ' colspan="4"' : '') + '>' + title + '</td>';
});
for (var c = 11; c < 20; c++) {
    html += '<td></td>';
}
html += '</tr>';

rows.forEach(function (row, r) {
    html += '<tr><th>' + (r + 2) + '</th><td>' + (r + 1) + '</td>';
    for (var c = 0; c < 19; c++) {
        html += '<td>' + (row[c] === undefined ? '' : row[c]) + '</td>';
    }
    html += '</tr>';
});

document.getElementById('grid').innerHTML = html + '</tbody>';
```
